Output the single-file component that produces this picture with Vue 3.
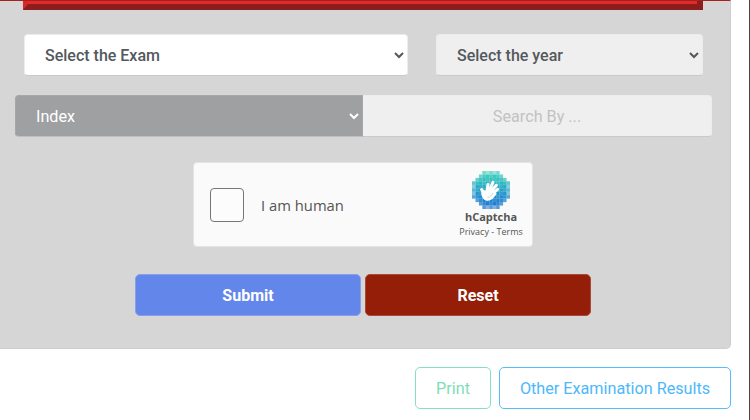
<script setup>
const pixels = []
// rounded block of small squares for the hCaptcha mark, fading at the rim
const rows = [[3, 7], [2, 8], [1, 9], [0, 10], [0, 10], [0, 10], [0, 10], [0, 10], [1, 9], [2, 8], [3, 7]]
const colors = ['#45cfbd', '#3cc9bd', '#33c1bf', '#2cb6c1', '#28abc4', '#25a1c7', '#2397ca', '#218dcc', '#2085ce', '#1f7ecf', '#1f78d0']
rows.forEach((r, y) => {
  for (let x = r[0]; x <= r[1]; x++) {
    const edge = x === r[0] || x === r[1] || y === 0 || y === 10
    const checker = (x + y) % 2 === 0
    pixels.push({
      x: x * 3.45,
      y: y * 3.45,
      fill: colors[y],
      op: edge ? (checker ? 0.55 : 0.75) : (checker ? 0.92 : 1)
    })
  }
})
</script>

<template>
  <div class="page">
    <div class="panel">
      <div class="banner"></div>

      <div class="row-selects">
        <select class="field exam">
          <option>Select the Exam</option>
        </select>
        <select class="field year">
          <option>Select the year</option>
        </select>
      </div>

      <div class="search-row">
        <select class="index-select">
          <option>Index</option>
        </select>
        <input class="search-input" placeholder="Search By ..." />
      </div>

      <div class="captcha">
        <div class="check"></div>
        <span class="human">I am human</span>
        <div class="brand">
          <svg class="logo" width="38" height="38" viewBox="0 0 38 38">
            <rect
              v-for="(p, i) in pixels"
              :key="i"
              :x="p.x"
              :y="p.y"
              width="3.5"
              height="3.5"
              :fill="p.fill"
              :opacity="p.op"
            />
            <g stroke="#fff" stroke-width="3" stroke-linecap="round" fill="none">
              <path d="M13 23 L9.6 18.6" />
              <path d="M15 21 L16 13.4" />
              <path d="M17 20 L21 11.4" />
              <path d="M18 21 L24.4 14.4" />
              <path d="M19 23 L25.6 18.4" />
            </g>
            <path d="M9.4 20 L22 18 L24.6 22.6 C22.6 27 18.4 30.4 14.6 29.8 C10.8 29 8.6 24 9.4 20 Z" fill="#fff" />
            <path d="M21 22 C20 24.4 18 26 15.6 26.6" stroke="#9ad6ec" stroke-width="0.8" fill="none" />
          </svg>
          <div class="brand-name">hCaptcha</div>
          <div class="brand-links">Privacy - Terms</div>
        </div>
      </div>

      <div class="actions">
        <button class="btn submit">Submit</button>
        <button class="btn reset">Reset</button>
      </div>
    </div>

    <div class="footer">
      <button class="outline print">Print</button>
      <button class="outline other">Other Examination Results</button>
    </div>
  </div>
</template>

<style>
html, body {
  margin: 0;
  background: #fff;
  overflow: hidden;
}
</style>

<style scoped>
.page {
  width: 750px;
  height: 420px;
  box-sizing: border-box;
  overflow: hidden;
  font-family: Roboto, "Liberation Sans", sans-serif;
  border-right: 1px solid #444;
}
.panel {
  width: 731px;
  height: 349px;
  box-sizing: border-box;
  background: #d6d6d6;
  border-top: 1px solid #a52020;
  border-bottom: 1px solid #cfcfcf;
  border-right: 1px solid #cfcfcf;
  border-bottom-right-radius: 5px;
  overflow: hidden;
}
.banner {
  width: 680px;
  height: 30px;
  box-sizing: border-box;
  margin: -21px 0 0 23px;
  background: #e12b2b;
  border-style: solid;
  border-width: 0 6px 6px 5px;
  border-color: #8d1c1c #8d1c1c #8d1c1c #d92626;
}
.row-selects {
  display: flex;
  gap: 28px;
  margin: 24px 0 0 24px;
}
.field {
  height: 42px;
  box-sizing: border-box;
  padding: 0 0 0 16px;
  border: 1px solid #ececec;
  border-bottom-color: #c9c9c9;
  border-radius: 4px;
  font-family: inherit;
  font-size: 16px;
  font-weight: 500;
  color: #54585e;
}
.exam {
  width: 384px;
  background: #fff;
}
.year {
  width: 267px;
  background: #efefef;
}
.search-row {
  display: flex;
  margin: 19px 0 0 15px;
  width: 697px;
  height: 42px;
}
.index-select {
  width: 348px;
  box-sizing: border-box;
  padding-left: 16px;
  border: 1px solid #a6a7a8;
  border-bottom-color: #c0c0c0;
  border-radius: 4px 0 0 4px;
  background: #9fa0a1;
  color: #fff;
  font-family: inherit;
  font-size: 16.2px;
}
.search-input {
  flex: 1;
  min-width: 0;
  box-sizing: border-box;
  border: 1px solid #ececec;
  border-bottom-color: #c9c9c9;
  border-left: 0;
  border-radius: 0 4px 4px 0;
  background: #efefef;
  font-family: inherit;
  font-size: 16.2px;
  text-align: center;
  color: #495057;
}
.search-input::placeholder {
  color: #c2c2c2;
  opacity: 1;
}
.captcha {
  display: flex;
  align-items: center;
  width: 340px;
  height: 85px;
  box-sizing: border-box;
  margin: 25px 0 0 193px;
  padding: 0 10px 0 17px;
  background: #fafafa;
  border: 1px solid #e4e4e4;
  border-radius: 4px;
  font-family: "Open Sans", sans-serif;
}
.check {
  width: 34px;
  height: 34px;
  margin-left: -1px;
  box-sizing: border-box;
  background: #fcfcfc;
  border: 1px solid #767676;
  border-radius: 4px;
}
.human {
  margin-left: 17px;
  padding-top: 1px;
  font-size: 14.8px;
  color: #555;
}
.brand {
  margin-left: auto;
  display: flex;
  flex-direction: column;
  align-items: center;
  width: 62px;
}
.logo {
  display: block;
}
.brand-name {
  font-size: 11px;
  font-weight: 700;
  line-height: 15px;
  color: #555;
}
.brand-links {
  margin-top: 1px;
  font-size: 9px;
  line-height: 14px;
  white-space: nowrap;
  color: #555;
}
.actions {
  display: flex;
  gap: 4px;
  margin: 27px 0 0 135px;
}
.btn {
  width: 226px;
  height: 42px;
  border-radius: 5px;
  font-family: inherit;
  font-size: 16px;
  font-weight: 700;
  color: #fff;
}
.submit {
  background: #6286ea;
  border: 1px solid #86a0ea;
}
.reset {
  background: #951e08;
  border: 1px solid #a84a38;
}
.footer {
  display: flex;
  justify-content: flex-end;
  gap: 8px;
  width: 731px;
  margin-top: 18px;
}
.outline {
  height: 42px;
  box-sizing: border-box;
  background: #fff;
  border-radius: 5px;
  font-family: inherit;
  font-size: 16.2px;
}
.print {
  width: 76px;
  border: 1px solid #86e0bb;
  color: #7fddb6;
}
.other {
  width: 232px;
  border: 1px solid #55bdfa;
  color: #4db8fb;
}
</style>
